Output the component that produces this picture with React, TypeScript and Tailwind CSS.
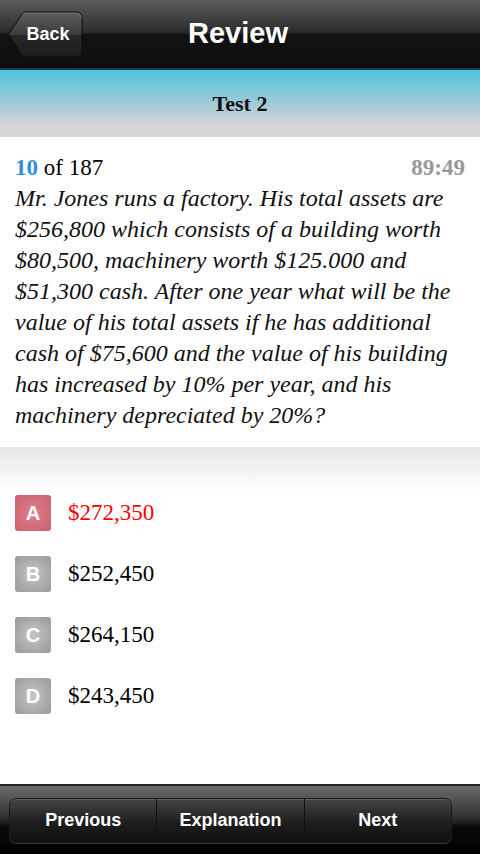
const options = [
  { letter: "A", text: "$272,350", wrong: true },
  { letter: "B", text: "$252,450" },
  { letter: "C", text: "$264,150" },
  { letter: "D", text: "$243,450" },
];

const questionLines = [
  "Mr. Jones runs a factory. His total assets are",
  "$256,800 which consists of a building worth",
  "$80,500, machinery worth $125.000 and",
  "$51,300 cash. After one year what will be the",
  "value of his total assets if he has additional",
  "cash of $75,600 and the value of his building",
  "has increased by 10% per year, and his",
  "machinery depreciated by 20%?",
];

const sans = "font-['Helvetica','Liberation_Sans',Arial,sans-serif]";
const serif = "font-['Times_New_Roman','Liberation_Serif',serif]";

function BackButton() {
  return (
    <button
      className={`absolute left-[7px] top-[11px] flex h-[47px] w-[76px] items-center justify-center pl-[6px] text-[18px] font-bold text-white ${sans}`}
    >
      <svg className="absolute inset-0" width="76" height="47" viewBox="0 0 76 47">
        <defs>
          <linearGradient id="backg" x1="0" y1="0" x2="0" y2="1">
            <stop offset="0" stopColor="#5e5e5e" />
            <stop offset="0.5" stopColor="#3c3c3c" />
            <stop offset="0.52" stopColor="#272727" />
            <stop offset="1" stopColor="#1c1c1c" />
          </linearGradient>
        </defs>
        <path
          d="M1.5 23.5 L15 3 Q16.5 1 19 1 L69 1 Q75 1 75 7 L75 40 Q75 46 69 46 L19 46 Q16.5 46 15 44 Z"
          fill="url(#backg)"
          stroke="#0b0b0b"
          strokeWidth="1"
        />
        <path d="M16 2.5 Q17 2 19 2 L69 2 Q74 2 74 7" fill="none" stroke="rgba(255,255,255,0.18)" />
      </svg>
      <span className="relative">Back</span>
    </button>
  );
}

export default function App() {
  return (
    <div className="flex h-[854px] w-[480px] flex-col overflow-hidden bg-white">
      {/* nav bar */}
      <header className="relative flex h-[68px] shrink-0 items-center justify-center bg-[linear-gradient(#5c5c5c,#2a2a2a_48%,#121212_50%,#0e0e0e)]">
        <BackButton />
        <h1 className={`ml-[-4px] text-[29px] font-bold text-white ${sans}`}>Review</h1>
      </header>

      {/* section band */}
      <div className="flex h-[69px] shrink-0 items-center justify-center border-t-2 border-[#26394a] bg-[linear-gradient(#4ec2dc,#a9ccd8_55%,#d3d4d6_80%,#d6d6d8)]">
        <h2 className={`text-[22px] font-bold text-[#111] ${serif}`}>Test 2</h2>
      </div>

      {/* question */}
      <section className={`px-[15px] pt-[16px] ${serif}`}>
        <div className="flex items-center justify-between text-[23px] leading-[30px]">
          <span className="text-black">
            <span className="font-bold text-[#2f8fde]">10</span> of 187
          </span>
          <span className="font-bold text-[#999]">89:49</span>
        </div>
        <p className="text-[24px] italic leading-[31px] text-[#111]">
          {questionLines.map((line) => (
            <span key={line} className="block whitespace-nowrap">
              {line}
            </span>
          ))}
        </p>
      </section>

      <div className="mt-[16px] h-[46px] shrink-0 bg-[linear-gradient(#e5e6e8,#ffffff)]" />

      {/* answers */}
      <ul className="flex flex-1 flex-col gap-[25px] px-[15px] pt-[2px]">
        {options.map((o) => (
          <li key={o.letter} className="flex items-center gap-[17px]">
            <span
              className={`flex h-[36px] w-[36px] items-center justify-center rounded-[3px] text-[20px] font-bold text-white ${sans} ${
                o.wrong
                  ? "bg-[radial-gradient(circle,#e0808c,#c9606c)]"
                  : "bg-[radial-gradient(circle,#c6c6c6,#989898)]"
              }`}
            >
              {o.letter}
            </span>
            <span className={`text-[23px] ${serif} ${o.wrong ? "text-[#f00]" : "text-black"}`}>
              {o.text}
            </span>
          </li>
        ))}
      </ul>

      {/* toolbar */}
      <footer className="flex h-[70px] shrink-0 items-center border-t-2 border-[#222] bg-[linear-gradient(#6a6a6a,#2e2e2e_48%,#0a0a0a_60%,#000)] pl-[9px] pr-[28px]">
        <div
          className={`flex h-[45px] flex-1 overflow-hidden rounded-[7px] border border-[#1a1a1a] shadow-[inset_0_1px_0_rgba(255,255,255,0.15),0_1px_0_rgba(255,255,255,0.2)] bg-[linear-gradient(#444,#1e1e1e_55%,#101010)] text-[18px] font-bold text-white ${sans}`}
        >
          {["Previous", "Explanation", "Next"].map((label, i) => (
            <button
              key={label}
              className={`flex flex-1 items-center justify-center ${i > 0 ? "border-l border-[#111]" : ""}`}
            >
              {label}
            </button>
          ))}
        </div>
      </footer>
    </div>
  );
}
